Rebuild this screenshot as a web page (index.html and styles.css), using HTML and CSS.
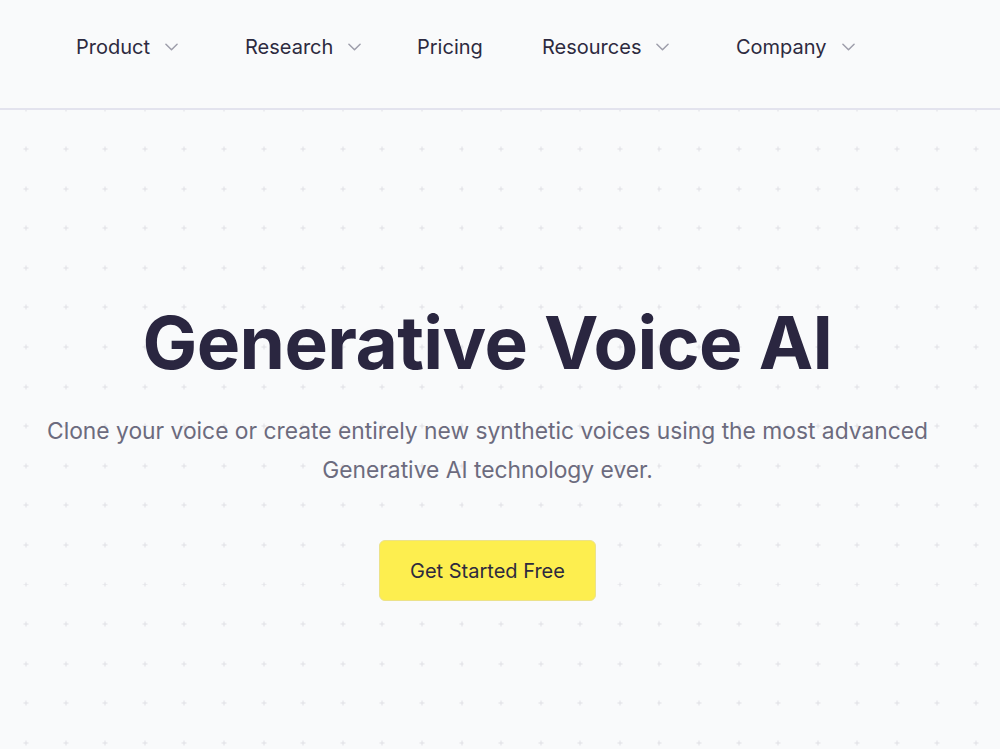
FILE: index.html
```html
<!DOCTYPE html>
<html lang="en">
<head>
<meta charset="utf-8">
<title>Generative Voice AI</title>
<link rel="stylesheet" href="styles.css">
</head>
<body>
<header class="header">
  <nav class="nav">
    <a class="nav-item" href="#">Product <svg class="chev" viewBox="0 0 14 8"><path d="M1 1l6 6 6-6"/></svg></a>
    <a class="nav-item" href="#">Research <svg class="chev" viewBox="0 0 14 8"><path d="M1 1l6 6 6-6"/></svg></a>
    <a class="nav-item" href="#">Pricing</a>
    <a class="nav-item" href="#">Resources <svg class="chev" viewBox="0 0 14 8"><path d="M1 1l6 6 6-6"/></svg></a>
    <a class="nav-item" href="#">Company <svg class="chev" viewBox="0 0 14 8"><path d="M1 1l6 6 6-6"/></svg></a>
  </nav>
</header>
<main class="hero">
  <h1 class="title">Generative Voice AI</h1>
  <p class="subtitle">Clone your voice or create entirely new synthetic voices using the most advanced Generative AI technology ever.</p>
  <a class="cta" href="#">Get Started Free</a>
</main>
</body>
</html>
```
FILE: styles.css
```css
* { box-sizing: border-box; }
html, body { margin: 0; padding: 0; }
body {
  font-family: Inter, "Noto Sans", sans-serif;
  background-color: #f9fafb;
  background-image: url("data:image/svg+xml,%3Csvg xmlns='http://www.w3.org/2000/svg' width='39.6' height='39.6'%3E%3Cpath d='M17.3 19.8h5M19.8 17.3v5' stroke='%23dfdfe5' stroke-width='1'/%3E%3C/svg%3E");
  background-size: 39.6px 39.6px;
  background-position: 6.2px 10.4px;
  min-height: 749px;
  color: #2b2840;
}
.header {
  height: 110px;
  background: #f9fafb;
  border-bottom: 2px solid #e3e3ee;
  display: flex;
  align-items: center;
}
.nav {
  display: grid;
  grid-template-columns: 169px 172px 125px 194px auto;
  padding-left: 76px;
  margin-top: -14px;
}
.nav-item {
  display: flex;
  align-items: center;
  gap: 15px;
  font-size: 20px;
  color: #2d2a40;
  text-decoration: none;
}
.chev {
  width: 13px;
  height: 8px;
  fill: none;
  stroke: #9e9eab;
  stroke-width: 1.6;
  stroke-linecap: round;
  stroke-linejoin: round;
}
.hero {
  display: flex;
  flex-direction: column;
  align-items: center;
  text-align: center;
  padding-top: 196px;
  padding-right: 25px;
}
.title {
  margin: 0;
  font-size: 73px;
  font-weight: 700;
  letter-spacing: -0.6px;
  line-height: 1;
  color: #2a2640;
}
.subtitle {
  margin: 32px 0 0;
  max-width: 920px;
  font-size: 22.8px;
  line-height: 39px;
  color: #6c6b7e;
}
.cta {
  margin-top: 51px;
  width: 217px;
  height: 61px;
  display: flex;
  align-items: center;
  justify-content: center;
  background: #fdee4f;
  border: 1px solid #ece28a;
  border-radius: 6px;
  font-size: 20px;
  color: #2d2a3e;
  text-decoration: none;
}
```
